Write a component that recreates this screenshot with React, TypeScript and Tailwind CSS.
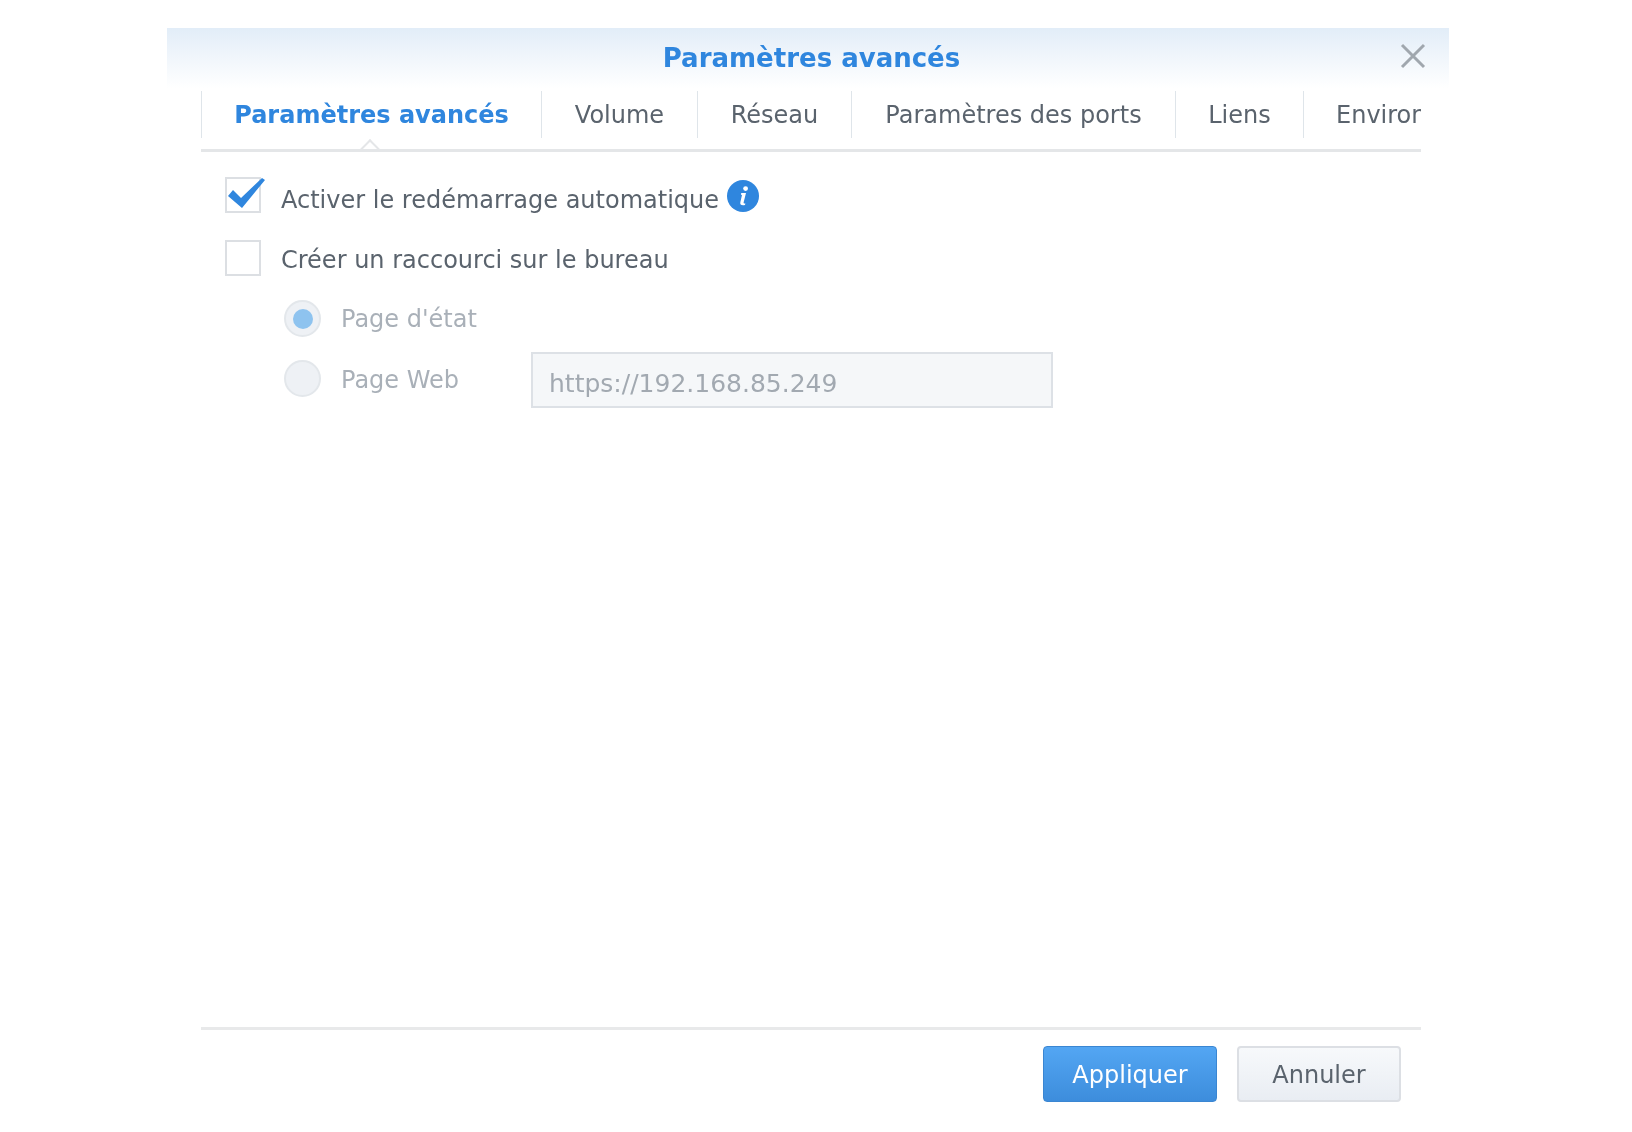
const tabs = [
  { label: "Volume", width: "w-[156px]" },
  { label: "Réseau", width: "w-[154px]" },
  { label: "Paramètres des ports", width: "w-[324px]" },
  { label: "Liens", width: "w-[128px]" },
];

const CheckIcon = () => (
  <svg width="42" height="36" viewBox="0 0 42 36" className="absolute left-[-2px] top-[-2px]">
    <path d="M3 19 L8 13 L16 21 L37 1 L40 3 L17 31 Z" fill="#2f86de" />
  </svg>
);

const InfoIcon = () => (
  <svg width="32" height="32" viewBox="0 0 32 32" className="ml-2 mt-[2px]">
    <circle cx="16" cy="16" r="16" fill="#2f86de" />
    <circle cx="18.6" cy="8.6" r="2.4" fill="#fff" />
    <path d="M14.2 13 L19 13 L16.6 22.6 Q16.4 24 18.4 23.4 L18 25 Q12.4 26 13.4 22 L15 15 L14 14.8 Z" fill="#fff" />
  </svg>
);

const CloseIcon = () => (
  <svg width="26" height="26" viewBox="0 0 26 26">
    <path d="M2 2 L24 24 M24 2 L2 24" stroke="#a0a7ae" strokeWidth="3" fill="none" />
  </svg>
);

const Radio = ({ checked, label }: { checked?: boolean; label: string }) => (
  <div className="flex items-center gap-[20px]">
    <span className="flex h-[37px] w-[37px] items-center justify-center rounded-full border-2 border-[#e3e7eb] bg-[#eef1f5]">
      {checked && <span className="h-[20px] w-[20px] rounded-full bg-[#8ec3ef]" />}
    </span>
    <span className={checked ? "text-[#a9b0b8]" : "pt-[3px] text-[#a9b0b8]"}>{label}</span>
  </div>
);

export default function App() {
  return (
    <div className="min-h-[1132px] bg-white pl-[167px] pt-[28px] font-['DejaVu_Sans',sans-serif] text-[24px] text-[#5a636d] blur-[0.5px]">
      <div className="w-[1282px]">
        <div className="relative flex h-[60px] items-center justify-center bg-gradient-to-b from-[#e2edf8] to-white pl-[7px]">
          <h1 className="text-[26px] font-bold text-[#2f86de]">Paramètres avancés</h1>
          <div className="absolute right-[23px] top-[15px]">
            <CloseIcon />
          </div>
        </div>

        <div className="ml-[34px] w-[1220px]">
          <div className="relative flex h-[64px] items-center overflow-hidden border-b-[3px] border-[#e4e6e8] pb-[10px] pt-[2px]">
            <div className="flex h-[47px] w-[341px] shrink-0 items-center justify-center border-x border-[#dfe5ea] font-bold text-[#2f86de]">
              Paramètres avancés
            </div>
            {tabs.map((tab) => (
              <div
                key={tab.label}
                className={`flex h-[47px] shrink-0 items-center justify-center border-r border-[#dfe5ea] ${tab.width}`}
              >
                {tab.label}
              </div>
            ))}
            <div className="flex h-[47px] w-[118px] shrink-0 items-center overflow-hidden pl-[32px]">Environnement</div>
            <span className="absolute bottom-[-7px] left-[162px] h-[14px] w-[14px] rotate-45 border-l-[2px] border-t-[2px] border-[#e4e6e8] bg-white" />
          </div>

          <div className="flex h-[878px] flex-col border-b-[3px] border-[#e8e9ea] pl-[24px] pt-[25px]">
            <div className="flex h-[36px] items-center">
              <span className="relative mr-[20px] h-[36px] w-[36px] border-2 border-[#dcdfe3] bg-white">
                <CheckIcon />
              </span>
              <span className="pt-[10px]">Activer le redémarrage automatique</span>
              <InfoIcon />
            </div>

            <div className="mt-[27px] flex h-[36px] items-center">
              <span className="mr-[20px] h-[36px] w-[36px] border-2 border-[#dcdfe3] bg-white" />
              <span className="pt-[3px]">Créer un raccourci sur le bureau</span>
            </div>

            <div className="mt-[24px] flex flex-col gap-[22px] pl-[59px]">
              <Radio checked label="Page d'état" />
              <div className="flex items-start">
                <div className="w-[247px]">
                  <Radio label="Page Web" />
                </div>
                <div className="-mt-[7px] flex h-[56px] w-[522px] items-center border-2 border-[#dde1e6] bg-[#f5f7f9] pl-[16px] pt-[8px] text-[25px] text-[#a2a9b1]">
                  https://192.168.85.249
                </div>
              </div>
            </div>
          </div>

          <div className="flex justify-end gap-[20px] pr-[20px] pt-[16px]">
            <button className="h-[56px] w-[174px] rounded-[4px] border border-[#3a86d2] bg-gradient-to-b from-[#53a6f3] to-[#3d8ddc] pt-[2px] text-white">
              Appliquer
            </button>
            <button className="h-[56px] w-[164px] rounded-[4px] border-2 border-[#dcdfe4] bg-gradient-to-b from-[#f7f9fb] to-[#e9edf3] pt-[2px]">
              Annuler
            </button>
          </div>
        </div>
      </div>
    </div>
  );
}
